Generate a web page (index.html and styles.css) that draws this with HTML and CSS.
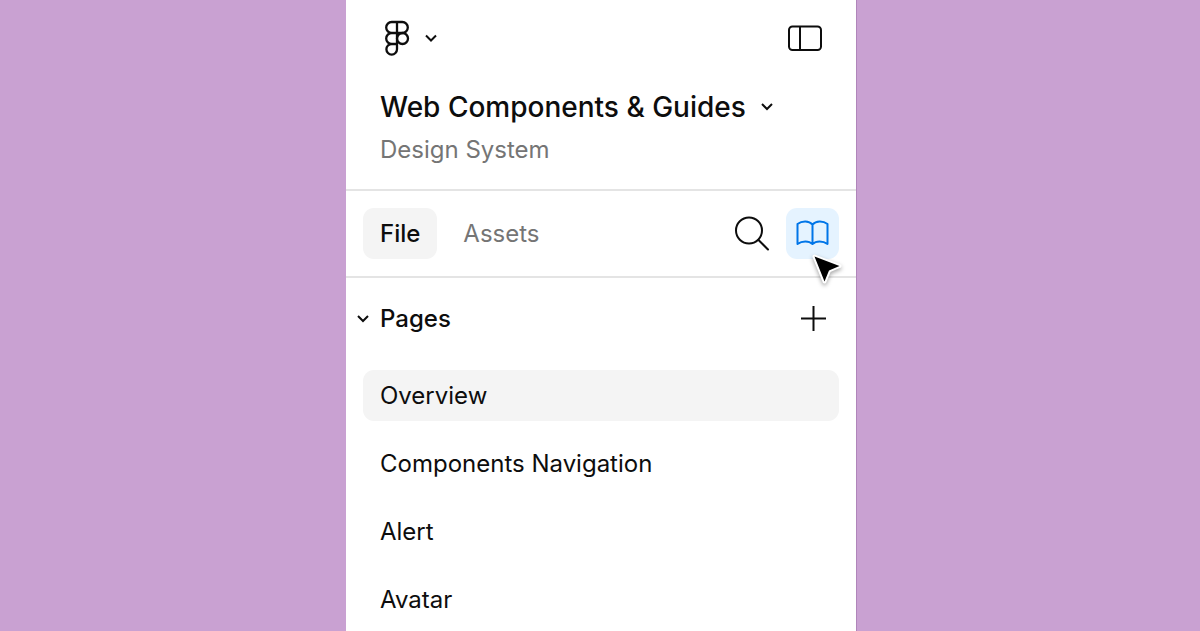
FILE: index.html
```html
<!DOCTYPE html>
<html lang="en">
<head>
    <meta charset="UTF-8">
    <meta name="viewport" content="width=device-width, initial-scale=1.0">
    <title>Web Components &amp; Guides</title>
    <link rel="stylesheet" href="styles.css">
</head>
<body>
    <aside class="sidebar">
        <header class="file-header">
            <div class="top-bar">
                <button type="button" class="menu-button" aria-label="Main menu">
                    <svg width="26" height="36" viewBox="0 0 26 36" fill="none" stroke="currentColor" stroke-width="2.300">
                        <path d="M13 2H7.700a5.500 5.500 0 0 0 0 11H13zM13 2h5.300a5.500 5.500 0 0 1 0 11H13M13 13H7.700a5.500 5.500 0 0 0 0 11H13zM13 24H7.700a5.300 5.300 0 1 0 5.300 5.300z"/>
                        <circle cx="18.500" cy="18.500" r="5.500"/>
                    </svg>
                    <svg class="chevron" width="14" height="10" viewBox="0 0 14 10"><path d="M2 2.500l5 5 5-5"/></svg>
                </button>
                <button type="button" aria-label="Toggle sidebar">
                    <svg width="36" height="28" viewBox="0 0 36 28" fill="none" stroke="currentColor" stroke-width="2">
                        <rect x="2" y="2.500" width="32" height="23.500" rx="3.500"/>
                        <path d="M13 2.500v23.500"/>
                    </svg>
                </button>
            </div>
            <button type="button" class="title-button">
                <h1>Web Components &amp; Guides</h1>
                <svg class="chevron" width="14" height="10" viewBox="0 0 14 10"><path d="M2 2l5 5 5-5"/></svg>
            </button>
            <p class="project">Design System</p>
        </header>

        <nav class="toolbar">
            <button type="button" class="tab active">File</button>
            <button type="button" class="tab">Assets</button>
            <button type="button" class="search" aria-label="Search">
                <svg width="36" height="36" viewBox="0 0 36 36" fill="none" stroke="currentColor" stroke-width="2" stroke-linecap="round">
                    <circle cx="15" cy="14.500" r="13"/>
                    <path d="M24.500 24L34 33.500"/>
                </svg>
            </button>
            <button type="button" class="library" aria-label="Libraries">
                <svg width="34" height="28" viewBox="0 0 34 28" fill="none" stroke="currentColor" stroke-width="2" stroke-linejoin="round">
                    <path d="M16.500 4.500C13 .5 6 .5 1.500 4V24C6 20.500 13 20.500 16.500 24C20 20.500 27 20.500 31.500 24V4C27 .5 20 .5 16.500 4.500zV24"/>
                </svg>
                <svg class="cursor" width="38" height="38" viewBox="0 0 38 38">
                    <path d="M5.500 5.500L30.500 15L20 19.500L15.500 30.500z" fill="#000" stroke="#fff" stroke-width="4" stroke-linejoin="round" paint-order="stroke"/>
                </svg>
            </button>
        </nav>

        <section class="pages">
            <div class="pages-header">
                <button type="button" class="pages-toggle">
                    <svg class="chevron" width="14" height="10" viewBox="0 0 14 10"><path d="M2 2l5 5 5-5"/></svg>
                    <h2>Pages</h2>
                </button>
                <button type="button" aria-label="Add page">
                    <svg width="28" height="28" viewBox="0 0 28 28" fill="none" stroke="currentColor" stroke-width="2">
                        <path d="M13.500 1v25M1 13.500h25"/>
                    </svg>
                </button>
            </div>
            <ul class="page-list">
                <li><a href="#overview" class="current">Overview</a></li>
                <li><a href="#components-navigation">Components Navigation</a></li>
                <li><a href="#alert">Alert</a></li>
                <li><a href="#avatar">Avatar</a></li>
            </ul>
        </section>
    </aside>
</body>
</html>
```
FILE: styles.css
```css
* {
    margin: 0;
    padding: 0;
    box-sizing: border-box;
}

body {
    display: grid;
    grid-template-columns: 346fr 511fr 343fr;
    min-height: 100vh;
    background-color: #c9a1d2;
    color: #0d0d0d;
    font-family: Inter, sans-serif;
    font-size: 24px;
    line-height: 34px;
}

.sidebar {
    grid-column: 2;
    background-color: #fff;
    border-right: 1px solid #b085ba;
}

button {
    display: flex;
    align-items: center;
    border: none;
    background: none;
    color: inherit;
    font: inherit;
    cursor: pointer;
}

svg {
    display: block;
    flex: none;
}

.chevron {
    fill: none;
    stroke: currentColor;
    stroke-width: 2;
}

.file-header {
    padding: 20px 33px 22px 34px;
    border-bottom: 2px solid #e4e4e4;
}

.top-bar {
    display: flex;
    justify-content: space-between;
    align-items: center;
    margin-bottom: 34px;
    padding-left: 4px;
}

.menu-button,
.title-button {
    gap: 14px;
}

h1 {
    font-size: 28px;
    font-weight: 500;
}

.project {
    margin-top: 9px;
    color: #757575;
}

.toolbar {
    display: flex;
    align-items: center;
    gap: 9px;
    padding: 17px;
    border-bottom: 2px solid #e4e4e4;
}

.tab {
    height: 51px;
    padding: 0 17px;
    border-radius: 11px;
    color: #757575;
}

.tab.active {
    background-color: #f4f4f4;
    color: #0d0d0d;
    font-weight: 500;
}

.search {
    margin-left: auto;
    margin-right: 7px;
}

.library {
    position: relative;
    justify-content: center;
    width: 53px;
    height: 51px;
    border-radius: 11px;
    background-color: #e5f3ff;
    color: #0075e8;
}

/* Pointer hovering over the library button */
.cursor {
    position: absolute;
    top: 43px;
    left: 23px;
    filter: drop-shadow(0 2px 2px rgba(0, 0, 0, 0.35));
}

.pages {
    padding: 0 17px 17px;
}

.pages-header {
    display: flex;
    justify-content: space-between;
    align-items: center;
    height: 82px;
    margin-bottom: 10px;
    padding-right: 11px;
}

.pages-toggle {
    gap: 10px;
    margin-left: -7px;
}

h2 {
    font-size: 24px;
    font-weight: 500;
}

.page-list {
    display: flex;
    flex-direction: column;
    gap: 17px;
    list-style: none;
}

.page-list a {
    display: flex;
    align-items: center;
    height: 51px;
    padding: 0 17px;
    border-radius: 11px;
    color: inherit;
    text-decoration: none;
}

.page-list a.current {
    background-color: #f4f4f4;
}
```
